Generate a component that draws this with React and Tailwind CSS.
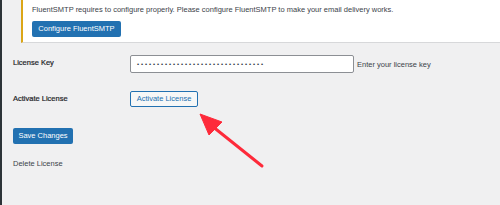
import React from 'react';

const dots = '•'.repeat(32);

export default function App() {
  return (
    <div className="relative w-[500px] h-[205px] overflow-hidden bg-[#f0f0f1] flex font-['Liberation_Sans',Arial,sans-serif] text-[7.5px] text-[#3c434a]">
      <div className="w-[2px] shrink-0 bg-[#2c3338]" />

      <div className="flex-1 flex flex-col">
        {/* notice */}
        <div className="ml-[19px] bg-white border-l-2 border-[#dba617] border-b border-b-[#d7d8da] pl-[9px] pt-[5px] pb-[5px]">
          <p className="leading-[9px]">
            FluentSMTP requires to configure properly. Please configure FluentSMTP to make your email delivery works.
          </p>
          <button className="mt-[7px] h-[16px] w-[89px] rounded-[2px] bg-[#2271b1] text-white text-[7.5px] leading-none">
            Configure FluentSMTP
          </button>
        </div>

        {/* form */}
        <div className="pl-[11px]">
          <div className="flex items-start mt-[12px]">
            <div className="w-[117px] pt-[3px] leading-[9px] font-medium text-[#1d2327] [-webkit-text-stroke:0.2px]">License Key</div>
            <div className="w-[224px] h-[18px] bg-white border border-[#8c8f94] rounded-[2px] flex items-center pl-[6px]">
              <span className="text-[6px] tracking-[1.9px] text-[#2c3338] leading-none">{dots}</span>
            </div>
            <span className="ml-[3px] mt-[5px] leading-[9px]">Enter your license key</span>
          </div>

          <div className="flex items-center mt-[18px]">
            <div className="w-[117px] leading-[9px] font-medium text-[#1d2327] [-webkit-text-stroke:0.2px] -mt-[2px]">Activate License</div>
            <button className="h-[16px] w-[68px] rounded-[2px] border border-[#2271b1] bg-[#f6f7f7] text-[#2271b1] text-[7.5px] leading-none">
              Activate License
            </button>
          </div>

          <button className="mt-[21px] h-[16px] w-[60px] rounded-[2px] bg-[#2271b1] text-white text-[7.5px] leading-none">
            Save Changes
          </button>

          <div className="mt-[15px] leading-[9px]">Delete License</div>
        </div>
      </div>

      {/* callout arrow */}
      <svg className="absolute left-0 top-0 pointer-events-none" width="500" height="205" viewBox="0 0 500 205">
        <line x1="262" y1="166" x2="212" y2="126" stroke="#fe2a3a" strokeWidth="3" strokeLinecap="round" />
        <polygon points="200,114 222,122 209,135" fill="#fe2a3a" stroke="#fe2a3a" strokeWidth="1" strokeLinejoin="round" />
      </svg>
    </div>
  );
}
